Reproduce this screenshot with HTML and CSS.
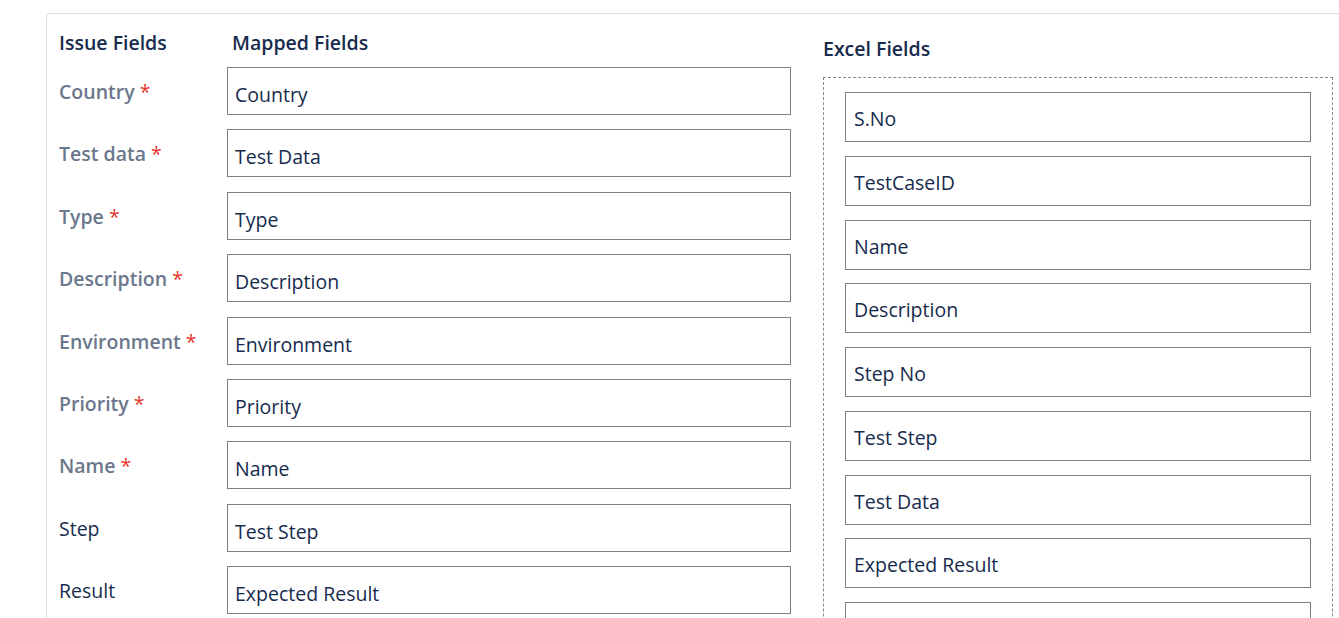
FILE: index.html
```html
<!DOCTYPE html>
<html>
<head>
<meta charset="utf-8">
<link rel="stylesheet" href="styles.css">
</head>
<body>
<div class="card">
  <div class="mapping">
    <div class="col-labels">
      <div class="head">Issue Fields</div>
      <div class="label req">Country <span class="star">*</span></div>
      <div class="label req">Test data <span class="star">*</span></div>
      <div class="label req">Type <span class="star">*</span></div>
      <div class="label req">Description <span class="star">*</span></div>
      <div class="label req">Environment <span class="star">*</span></div>
      <div class="label req">Priority <span class="star">*</span></div>
      <div class="label req">Name <span class="star">*</span></div>
      <div class="label">Step</div>
      <div class="label">Result</div>
    </div>
    <div class="col-mapped">
      <div class="head">Mapped Fields</div>
      <div class="field">Country</div>
      <div class="field">Test Data</div>
      <div class="field">Type</div>
      <div class="field">Description</div>
      <div class="field">Environment</div>
      <div class="field">Priority</div>
      <div class="field">Name</div>
      <div class="field">Test Step</div>
      <div class="field">Expected Result</div>
    </div>
  </div>
  <div class="excel">
    <div class="head">Excel Fields</div>
    <div class="dropzone">
      <div class="xfield">S.No</div>
      <div class="xfield">TestCaseID</div>
      <div class="xfield">Name</div>
      <div class="xfield">Description</div>
      <div class="xfield">Step No</div>
      <div class="xfield">Test Step</div>
      <div class="xfield">Test Data</div>
      <div class="xfield">Expected Result</div>
      <div class="xfield"></div>
    </div>
  </div>
</div>
</body>
</html>
```

FILE: styles.css
```css
html, body {
  margin: 0;
  padding: 0;
  background: #fff;
  overflow: hidden;
}
body {
  font-family: "Open Sans", "Noto Sans", sans-serif;
  color: #172b4d;
}
.card {
  margin: 13px 0 0 46px;
  width: 1400px;
  height: 700px;
  border: 1px solid #dcdcdc;
  border-radius: 4px;
  padding: 15px 0 0 12px;
  box-sizing: border-box;
  display: flex;
}
.mapping {
  display: flex;
}
.col-labels {
  width: 168px;
}
.col-mapped {
  width: 564px;
}
.head {
  font-size: 19.5px;
  font-weight: 600;
  line-height: 28px;
  height: 28px;
  margin-bottom: 10px;
  color: #172b4d;
}
.col-mapped .head {
  padding-left: 5px;
}
.label {
  height: 48px;
  line-height: 50px;
  margin-bottom: 14.4px;
  font-size: 19.5px;
  color: #172b4d;
  white-space: nowrap;
}
.label.req {
  font-weight: 600;
  color: #6b778c;
}
.star {
  color: #e5352b;
  font-weight: 400;
}
.field {
  box-sizing: border-box;
  height: 48px;
  margin-bottom: 14.4px;
  border: 1px solid #7f7f7f;
  padding: 15px 7px 0 7px;
  font-size: 19.5px;
  line-height: 24px;
  color: #172b4d;
}
.excel {
  margin-left: 32px;
  padding-top: 6px;
}
.excel .head {
  margin-bottom: 14px;
}
.dropzone {
  width: 510px;
  box-sizing: border-box;
  border: 1px dashed #8a8a8a;
  padding: 14px 0 0 21px;
  height: 700px;
}
.xfield {
  box-sizing: border-box;
  width: 466px;
  height: 50px;
  margin-bottom: 13.75px;
  border: 1px solid #7f7f7f;
  padding: 14px 8px 0 8px;
  font-size: 19.5px;
  line-height: 24px;
  color: #172b4d;
}
```
